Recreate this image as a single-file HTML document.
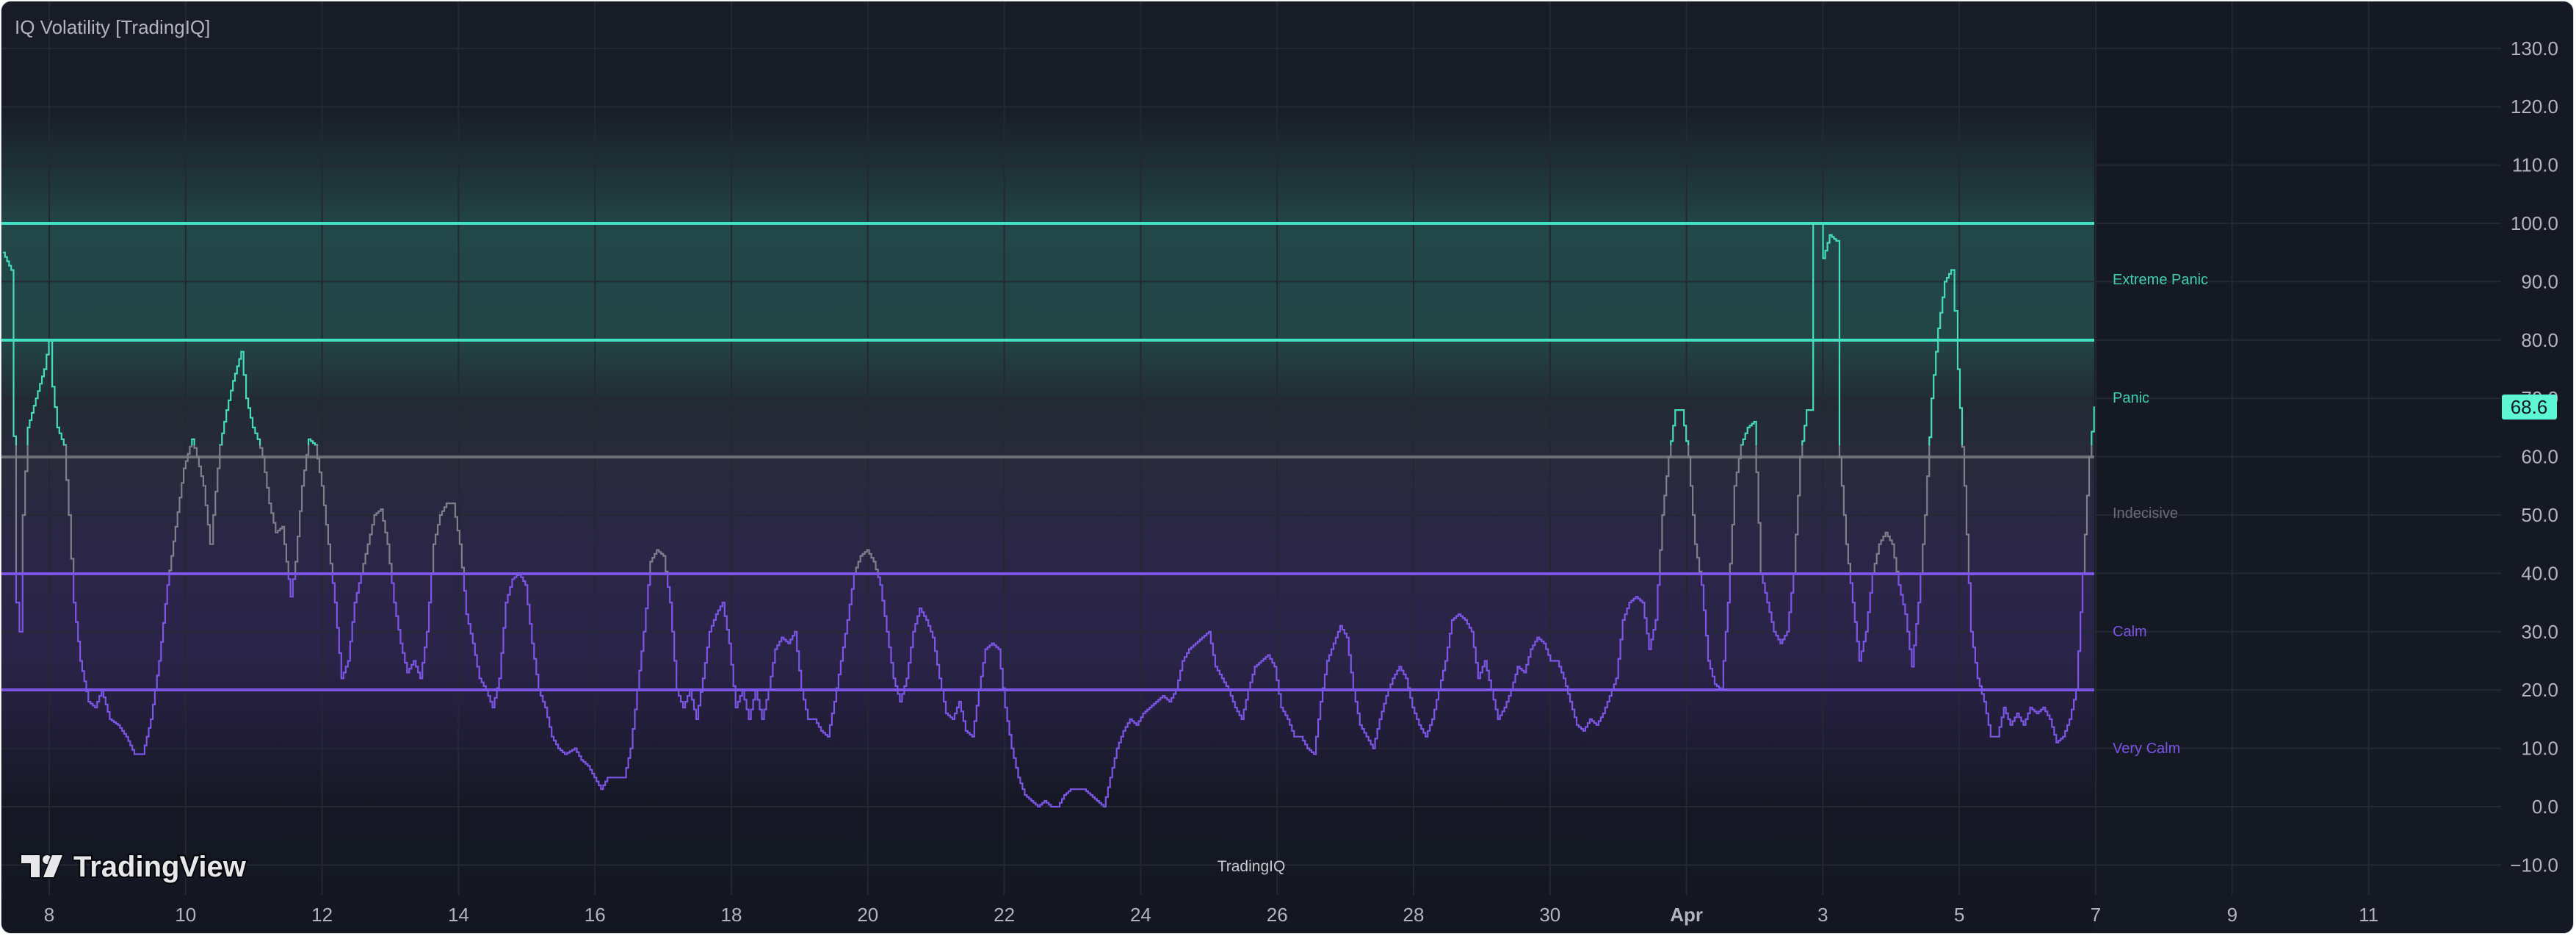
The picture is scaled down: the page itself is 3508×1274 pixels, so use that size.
<!DOCTYPE html>
<html><head><meta charset="utf-8"><style>
html,body{margin:0;padding:0;background:#fff;}
body{width:3508px;height:1274px;overflow:hidden;}
#f{position:absolute;left:1px;top:1px;width:3504px;height:1270px;border-radius:14px;background:#151924;overflow:hidden;border:1px solid #d7d9de;box-sizing:border-box}
svg{position:absolute;left:0;top:0}
text{font-family:"Liberation Sans",sans-serif}
</style></head><body><div id="f">
<svg width="3508" height="1274" viewBox="0 0 3508 1274">
<defs>
<linearGradient id="bg" x1="0" y1="0" x2="0" y2="1274" gradientUnits="userSpaceOnUse">
<stop offset="0" stop-color="#181c27"/>
<stop offset="0.11" stop-color="#181c27"/>
<stop offset="0.22" stop-color="#213e41"/>
<stop offset="0.24" stop-color="#224749"/>
<stop offset="0.36" stop-color="#224546"/>
<stop offset="0.43" stop-color="#222a34"/>
<stop offset="0.49" stop-color="#292a3b"/>
<stop offset="0.6" stop-color="#2b2548"/>
<stop offset="0.7" stop-color="#2a2448"/>
<stop offset="0.79" stop-color="#1f1c35"/>
<stop offset="0.86" stop-color="#151824"/>
<stop offset="1" stop-color="#131722"/>
</linearGradient>
<linearGradient id="ln" x1="0" y1="0" x2="0" y2="1274" gradientUnits="userSpaceOnUse">
<stop offset="0" stop-color="#46dcbb"/>
<stop offset="0.474" stop-color="#46dcbb"/>
<stop offset="0.474" stop-color="#7f7f8c"/>
<stop offset="0.61" stop-color="#7f7f8c"/>
<stop offset="0.61" stop-color="#7c55e6"/>
<stop offset="1" stop-color="#7c55e6"/>
</linearGradient>
</defs>
<rect x="0" y="0" width="2850" height="1274" fill="url(#bg)"/>
<g id="grid" stroke="#242833" stroke-width="2"></g>
<line x1="0" y1="302" x2="2850" y2="302" stroke="#40e3c2" stroke-width="4"/>
<line x1="0" y1="461" x2="2850" y2="461" stroke="#40e3c2" stroke-width="4"/>
<line x1="0" y1="620" x2="2850" y2="620" stroke="#6f6f78" stroke-width="4"/>
<line x1="0" y1="779" x2="2850" y2="779" stroke="#7c55e6" stroke-width="4"/>
<line x1="0" y1="937" x2="2850" y2="937" stroke="#7c55e6" stroke-width="4"/>
<path id="data" fill="none" stroke="url(#ln)" stroke-width="2.2" stroke-linejoin="miter"/>
<text x="18" y="44" font-size="26" fill="#b2b5be">IQ Volatility [TradingIQ]</text>
<g font-size="20" font-weight="normal">
<text x="2875" y="385" fill="#3fcfb0">Extreme Panic</text>
<text x="2875" y="546" fill="#3fcfb0">Panic</text>
<text x="2875" y="703" fill="#6c6c76">Indecisive</text>
<text x="2875" y="864" fill="#7c55e6">Calm</text>
<text x="2875" y="1023" fill="#7c55e6">Very Calm</text>
</g>
<g id="yax" font-size="26" fill="#b2b5be" text-anchor="end"></g>
<g id="xax" font-size="26" fill="#b2b5be" text-anchor="middle"></g>
<rect x="3405" y="535" width="75" height="34" rx="3" fill="#5ef7d6"/>
<text x="3442" y="561" font-size="26" fill="#131722" text-anchor="middle">68.6</text>
<text x="1702" y="1184" font-size="21" fill="#c9cbd1" text-anchor="middle">TradingIQ</text>
<g fill="#e8e8ea" stroke="#05070c" stroke-width="3" paint-order="stroke">
<path d="M27 1162 H52 V1192 H40 V1173 H27 Z"/>
<circle cx="62" cy="1168" r="6"/>
<path d="M69 1162 H83 L71 1192 H57 Z"/>
<text x="98" y="1191" font-size="40" font-weight="bold" stroke-width="4">TradingView</text>
</g>
</svg></div>
<script>
var Y=function(v){return 1096-7.94*v};
var g=document.getElementById('grid'),ya=document.getElementById('yax'),xa=document.getElementById('xax');
var s='';
for(var v=-10;v<=130;v+=10){var y=Y(v);s+='<line x1="0" y1="'+y+'" x2="3404" y2="'+y+'"/>';
ya.innerHTML+='<text x="3482" y="'+(y+9)+'">'+(v<0?'\u221210.0':v.toFixed(1))+'</text>';}
var labs=['8','10','12','14','16','18','20','22','24','26','28','30','Apr','3','5','7','9','11'];
for(var i=0;i<labs.length;i++){var x=65+i*2*92.9;s+='<line x1="'+x+'" y1="0" x2="'+x+'" y2="1216"/>';
xa.innerHTML+='<text x="'+x+'" y="1252"'+(labs[i]=='Apr'?' font-weight="bold"':'')+'>'+labs[i]+'</text>';}
g.innerHTML=s;
var d=[0,95,5,92,8,35,10,30,12,50,15,65,20,70,25,75,28,80,30,72,33,65,37,62,40,50,43,35,47,25,52,18,56,17,60,20,65,15,70,14,75,12,80,9,85,9,90,15,95,25,100,38,105,48,110,58,115,63,118,60,122,55,126,45,128,50,132,62,136,68,140,73,145,78,148,70,152,65,155,63,158,60,162,52,166,47,170,48,175,36,178,42,182,55,186,63,190,62,194,55,198,45,202,35,206,22,210,25,214,35,218,40,222,45,226,50,230,51,234,45,238,35,242,28,246,23,250,25,254,22,258,30,262,45,266,50,270,52,274,52,278,45,282,33,286,28,290,22,294,20,298,17,302,22,306,35,310,39,314,40,318,38,322,28,326,20,330,17,334,12,338,10,342,9,348,10,352,8,356,7,360,5,364,3,368,5,372,5,378,5,382,10,386,20,390,30,394,42,398,44,402,43,406,35,410,20,414,17,418,20,422,15,426,22,430,30,434,33,438,35,442,28,446,17,450,20,454,15,458,20,462,15,466,20,470,27,474,29,478,28,482,30,486,20,490,15,494,15,498,13,502,12,506,18,510,25,514,32,518,40,522,43,526,44,530,42,534,38,538,30,542,22,546,18,550,22,554,30,558,34,562,32,566,29,570,22,574,16,578,15,582,18,586,13,590,12,594,20,598,27,602,28,606,27,610,17,614,10,618,5,622,2,626,1,630,0,634,1,638,0,642,0,646,2,650,3,654,3,658,3,662,2,666,1,670,0,674,5,678,10,682,13,686,15,690,14,694,16,698,17,702,18,706,19,710,18,714,20,718,25,722,27,726,28,730,29,734,30,738,24,742,22,746,20,750,17,754,15,758,20,762,24,766,25,770,26,774,24,778,17,782,15,786,12,790,12,794,10,798,9,802,18,806,25,810,28,814,31,818,29,822,20,826,14,830,12,834,10,838,15,842,19,846,22,850,24,854,22,858,17,862,14,866,12,870,15,874,20,878,25,882,32,886,33,890,32,894,30,898,22,902,25,906,20,910,15,914,17,918,20,922,24,926,23,930,27,934,29,938,28,942,25,946,25,950,22,954,18,958,14,962,13,966,15,970,14,974,16,978,19,982,22,986,32,990,35,994,36,998,35,1002,27,1006,32,1010,50,1014,60,1018,68,1022,68,1026,60,1030,45,1034,38,1038,25,1042,21,1046,20,1050,35,1054,55,1058,62,1062,65,1066,66,1070,40,1074,35,1078,30,1082,28,1086,30,1090,40,1094,60,1098,68,1100,68,1102,100,1106,100,1108,94,1112,98,1116,97,1118,60,1122,45,1126,35,1130,25,1134,30,1138,40,1142,45,1146,47,1150,45,1154,38,1158,33,1162,24,1166,35,1170,50,1174,70,1178,82,1182,90,1186,92,1188,85,1190,75,1194,55,1198,30,1202,22,1206,18,1210,12,1214,12,1218,17,1222,14,1226,16,1230,14,1234,17,1238,16,1242,17,1246,15,1250,11,1254,12,1258,15,1262,20,1266,40,1270,60,1273,68.6];
var p='';var px=null,py=null;
for(var i=0;i<d.length;i+=2){var x=d[i]*2.237+2,y=Y(d[i+1]);
 if(px===null){p='M'+x.toFixed(1)+' '+y.toFixed(1);}
 else{var n=Math.max(1,Math.round((x-px)/3));for(var k=1;k<=n;k++){var xx=px+(x-px)*k/n,yy=py+(y-py)*k/n;p+=' H'+xx.toFixed(1)+' V'+yy.toFixed(1);}}
 px=x;py=y;}
document.getElementById('data').setAttribute('d',p);
</script>
</body></html>
